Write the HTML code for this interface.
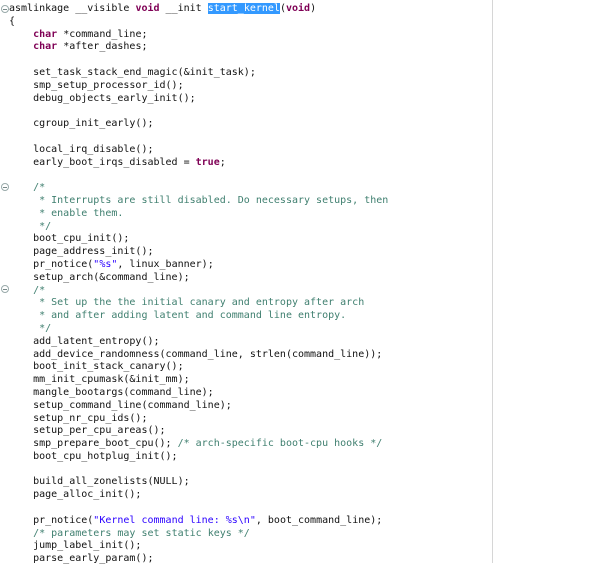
<!DOCTYPE html>
<html><head><meta charset="utf-8"><style>
html,body{margin:0;padding:0;background:#fff;width:600px;height:563px;overflow:hidden}
#m{position:absolute;left:492px;top:0;width:1px;height:563px;background:#d6d6d6}
pre{position:absolute;left:9px;top:3px;margin:0;font-family:"DejaVu Sans Mono","Liberation Mono",monospace;font-size:10px;line-height:12.8px;color:#111}
.k{color:#7f0055;font-weight:bold}
.c{color:#3f7f6f}
.s{color:#2a00ff}
.h{background:#3399ff;color:#fff}
.f{position:absolute;left:1px;width:6px;height:6px;border:1px solid #9aa;border-radius:50%;font-size:0}
.f::after{content:"";position:absolute;left:1px;top:2.5px;width:4px;height:1px;background:#788}
</style></head><body>
<div id="m"></div>
<div class="f" style="top:5px"></div>
<div class="f" style="top:183px"></div>
<div class="f" style="top:285px"></div>
<pre>asmlinkage __visible <span class="k">void</span> __init <span class="h">start_kernel</span>(<span class="k">void</span>)
{
    <span class="k">char</span> *command_line;
    <span class="k">char</span> *after_dashes;

    set_task_stack_end_magic(&amp;init_task);
    smp_setup_processor_id();
    debug_objects_early_init();

    cgroup_init_early();

    local_irq_disable();
    early_boot_irqs_disabled = <span class="k">true</span>;

<span class="c">    /*
     * Interrupts are still disabled. Do necessary setups, then
     * enable them.
     */</span>
    boot_cpu_init();
    page_address_init();
    pr_notice(<span class="s">"%s"</span>, linux_banner);
    setup_arch(&amp;command_line);
<span class="c">    /*
     * Set up the the initial canary and entropy after arch
     * and after adding latent and command line entropy.
     */</span>
    add_latent_entropy();
    add_device_randomness(command_line, strlen(command_line));
    boot_init_stack_canary();
    mm_init_cpumask(&amp;init_mm);
    mangle_bootargs(command_line);
    setup_command_line(command_line);
    setup_nr_cpu_ids();
    setup_per_cpu_areas();
    smp_prepare_boot_cpu(); <span class="c">/* arch-specific boot-cpu hooks */</span>
    boot_cpu_hotplug_init();

    build_all_zonelists(NULL);
    page_alloc_init();

    pr_notice(<span class="s">"Kernel command line: %s\n"</span>, boot_command_line);
    <span class="c">/* parameters may set static keys */</span>
    jump_label_init();
    parse_early_param();
</pre>
</body></html>
